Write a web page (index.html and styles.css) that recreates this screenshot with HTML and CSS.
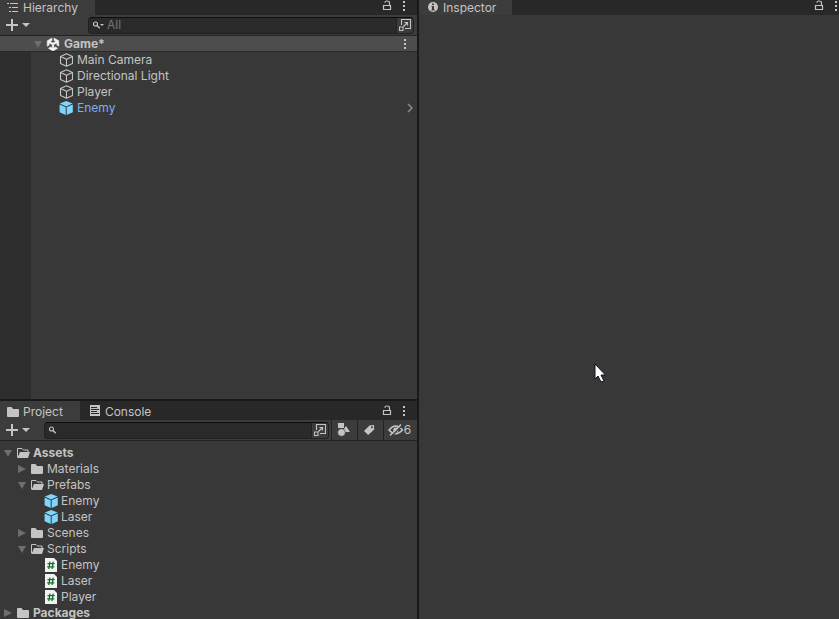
FILE: index.html
```html
<!DOCTYPE html>
<html lang="en">
  <head>
    <meta charset="UTF-8" />
    <meta name="viewport" content="width=device-width, initial-scale=1.0" />
    <title>Editor</title>
    <link rel="stylesheet" href="styles.css" />
  </head>
  <body>
    <svg class="sprite" aria-hidden="true">
      <symbol id="cube" viewBox="0 0 14 14">
        <path d="M7.500 .7 13.500 3.500v7L7.500 13.300 1.500 10.500v-7ZM1.500 3.500l6 2.800 6-2.800M7.500 6.300v7" fill="none" stroke="currentColor" stroke-width="1.1" stroke-linejoin="round" />
      </symbol>
      <symbol id="prefab" viewBox="0 0 14 14">
        <path d="M7.200 0l6.400 2.600L7.200 5.400.8 2.600ZM.6 3.500l6.100 2.700V14L.6 11.200ZM13.800 3.500 7.700 6.200V14l6.100-2.800Z" fill="currentColor" />
      </symbol>
      <symbol id="folder" viewBox="0 0 14 14">
        <path d="M1 3Q1 2 2 2h3.500l1.500 2h5q1 0 1 1v6q0 1-1 1H2q-1 0-1-1Z" fill="currentColor" />
      </symbol>
      <symbol id="folder-open" viewBox="0 0 14 14">
        <path d="M1.500 11.500V2.500H6l1.500 1.500h4.500v2" fill="none" stroke="currentColor" />
        <path d="M4 6H14l-2 6H1.500Z" fill="currentColor" />
      </symbol>
      <symbol id="script" viewBox="0 0 14 14">
        <path d="M1 0h9l3 3v11H1Z" fill="#f2f2f2" />
        <path d="M6 3.500 4.800 11M9.200 3.500 8 11M3.500 5.700h7.200M3.200 8.800h7.200" fill="none" stroke="#1c6b2c" stroke-width="1.300" />
      </symbol>
      <symbol id="down" viewBox="0 0 8 8"><path d="M0 1h8L4 8Z" fill="currentColor" /></symbol>
      <symbol id="right" viewBox="0 0 8 8"><path d="M0 0v8l8-4Z" fill="currentColor" /></symbol>
      <symbol id="lock" viewBox="0 0 10 12">
        <path d="M1.500 5.500h7v4h-7ZM7.500 5.500V3Q7.500 1 5 1 3 1 2.800 2.700" fill="none" stroke="currentColor" stroke-width="1.200" />
      </symbol>
      <symbol id="dots" viewBox="0 0 4 12">
        <path d="M1 1h2v2H1ZM1 5h2v2H1ZM1 9h2v2H1Z" fill="currentColor" />
      </symbol>
      <symbol id="plus" viewBox="0 0 12 12"><path d="M6 0v12M0 6h12" stroke="currentColor" stroke-width="2" /></symbol>
      <symbol id="caret" viewBox="0 0 8 4"><path d="M0 0h8L4 4Z" fill="currentColor" /></symbol>
      <symbol id="popout" viewBox="0 0 12 12">
        <path d="M2.500 6V.5h9v9H6M.5 8h3.500v3.500H.5ZM4.500 7.500 8.500 3.500M5.500 3.500h3v3" fill="none" stroke="currentColor" stroke-width="1.100" />
      </symbol>
      <symbol id="search" viewBox="0 0 10 10">
        <circle cx="3.500" cy="4" r="2" fill="none" stroke="currentColor" stroke-width="1.100" />
        <path d="M5 5.500 7.800 8.300" stroke="currentColor" stroke-width="1.300" />
      </symbol>
      <symbol id="hierarchy" viewBox="0 0 12 12">
        <path d="M0 2.500h2M3 2.500h8M2 6.500h2M5 6.500h6M2 10.500h2M5 10.500h6" stroke="currentColor" stroke-width="1.100" />
      </symbol>
      <symbol id="console" viewBox="0 0 10 12">
        <path d="M0 0h10v11H0Z" fill="currentColor" />
        <path d="M1 2.500h6M1 4.500h8M1 6.500h6M1 8.500h8" stroke="#282828" />
      </symbol>
      <symbol id="info" viewBox="0 0 10 10">
        <circle cx="5" cy="5" r="5" fill="currentColor" />
        <path d="M4 1.500h2V3H4ZM3.500 4H6v3.500h.8v1H3.300v-1H4V5h-.5Z" fill="#3c3c3c" />
      </symbol>
      <symbol id="unity" viewBox="0 0 14 14">
        <path d="M6 1v2.500L4.200 4.500 7 6.100l2.800-1.600L8 3.500V1l4.800 2.800v5.400l-2-1.200V5.900L7.800 7.600v3.500l1.700-1 2.100 1.200L7 14l-4.600-2.700 2.100-1.200 1.700 1V7.600L3.200 5.900V8l-2 1.200V3.800Z" fill="#f4f4f4" stroke="#f4f4f4" stroke-width=".5" />
      </symbol>
      <symbol id="shapes" viewBox="0 0 14 14">
        <path d="M1 0h6v5H1ZM9 3l4 6H8.500L6.500 6.500Z" fill="currentColor" />
        <circle cx="4.500" cy="9.500" r="3.800" fill="currentColor" stroke="#3c3c3c" stroke-width=".6" />
      </symbol>
      <symbol id="tag" viewBox="0 0 12 12">
        <path d="M5.500 1.500 10 1l.2 4.500-6 5.500L0 7Z" fill="currentColor" />
        <circle cx="8" cy="3.300" r="1" fill="#3c3c3c" />
      </symbol>
      <symbol id="hidden" viewBox="0 0 16 14">
        <path d="M1 7q6.500-8 13.500 0-7 7.500-13.500 0Z" fill="none" stroke="currentColor" stroke-width="1.500" />
        <circle cx="7.800" cy="7" r="2.500" fill="currentColor" />
        <path d="M3.200 13.200 14.200 2.200" stroke="#3c3c3c" stroke-width="1.300" />
        <path d="M2 12.500 13 1.500" stroke="currentColor" stroke-width="1.400" />
      </symbol>
      <symbol id="chevron" viewBox="0 0 6 10"><path d="m1 1 4 4-4 4" fill="none" stroke="currentColor" stroke-width="1.500" /></symbol>
    </svg>

    <main class="editor">
      <div class="column">
        <section class="panel hierarchy">
          <header class="tabs clipped">
            <button class="tab active tab-hierarchy"><svg class="icon-12"><use href="#hierarchy" /></svg>Hierarchy</button>
            <div class="tab-tools">
              <button aria-label="Lock hierarchy"><svg class="lock"><use href="#lock" /></svg></button>
              <button aria-label="Hierarchy menu"><svg class="dots"><use href="#dots" /></svg></button>
            </div>
          </header>
          <div class="toolbar hierarchy-bar">
            <button class="create" aria-label="Create object"><svg class="icon-12"><use href="#plus" /></svg><svg class="caret"><use href="#caret" /></svg></button>
            <div class="search">
              <svg class="icon-10"><use href="#search" /></svg><svg class="caret-small"><use href="#caret" /></svg>
              <input type="text" aria-label="Search hierarchy" placeholder="All" />
              <button class="popout" aria-label="Open hierarchy search"><svg class="icon-12"><use href="#popout" /></svg></button>
            </div>
          </div>
          <div class="scene">
            <svg class="arrow"><use href="#down" /></svg>
            <svg class="icon-14"><use href="#unity" /></svg>
            <b>Game*</b>
            <button class="push" aria-label="Scene menu"><svg class="dots"><use href="#dots" /></svg></button>
          </div>
          <div class="objects">
            <div class="gutter"></div>
            <ul class="object-list">
              <li><svg class="icon-14"><use href="#cube" /></svg>Main Camera</li>
              <li><svg class="icon-14"><use href="#cube" /></svg>Directional Light</li>
              <li><svg class="icon-14"><use href="#cube" /></svg>Player</li>
              <li class="linked">
                <svg class="icon-14 prefab"><use href="#prefab" /></svg>Enemy
                <button class="push" aria-label="Open prefab"><svg class="chevron"><use href="#chevron" /></svg></button>
              </li>
            </ul>
          </div>
        </section>

        <section class="panel project">
          <header class="tabs">
            <button class="tab active tab-project"><svg class="icon-14"><use href="#folder" /></svg>Project</button>
            <button class="tab tab-console"><svg class="console"><use href="#console" /></svg>Console</button>
            <div class="tab-tools">
              <button aria-label="Lock project"><svg class="lock"><use href="#lock" /></svg></button>
              <button aria-label="Project menu"><svg class="dots"><use href="#dots" /></svg></button>
            </div>
          </header>
          <div class="toolbar project-bar">
            <button class="create" aria-label="Create asset"><svg class="icon-12"><use href="#plus" /></svg><svg class="caret"><use href="#caret" /></svg></button>
            <div class="search">
              <svg class="icon-10"><use href="#search" /></svg>
              <input type="text" aria-label="Search project" />
              <button class="popout" aria-label="Open project search"><svg class="icon-12"><use href="#popout" /></svg></button>
            </div>
            <div class="filters">
              <button aria-label="Search by type"><svg class="icon-14"><use href="#shapes" /></svg></button>
              <button aria-label="Search by label"><svg class="icon-12"><use href="#tag" /></svg></button>
              <button class="hidden-count" aria-label="Hidden packages"><svg class="eye"><use href="#hidden" /></svg>6</button>
            </div>
          </div>
          <ul class="tree">
            <li><div class="row"><svg class="arrow"><use href="#down" /></svg><svg class="icon-14"><use href="#folder-open" /></svg><b>Assets</b></div>
              <ul>
                <li><div class="row"><svg class="arrow"><use href="#right" /></svg><svg class="icon-14"><use href="#folder" /></svg>Materials</div></li>
                <li><div class="row"><svg class="arrow"><use href="#down" /></svg><svg class="icon-14"><use href="#folder-open" /></svg>Prefabs</div>
                  <ul>
                    <li><div class="row leaf"><svg class="icon-14 prefab"><use href="#prefab" /></svg>Enemy</div></li>
                    <li><div class="row leaf"><svg class="icon-14 prefab"><use href="#prefab" /></svg>Laser</div></li>
                  </ul>
                </li>
                <li><div class="row"><svg class="arrow"><use href="#right" /></svg><svg class="icon-14"><use href="#folder" /></svg>Scenes</div></li>
                <li><div class="row"><svg class="arrow"><use href="#down" /></svg><svg class="icon-14"><use href="#folder-open" /></svg>Scripts</div>
                  <ul>
                    <li><div class="row leaf"><svg class="icon-14"><use href="#script" /></svg>Enemy</div></li>
                    <li><div class="row leaf"><svg class="icon-14"><use href="#script" /></svg>Laser</div></li>
                    <li><div class="row leaf"><svg class="icon-14"><use href="#script" /></svg>Player</div></li>
                  </ul>
                </li>
              </ul>
            </li>
            <li><div class="row"><svg class="arrow"><use href="#right" /></svg><svg class="icon-14"><use href="#folder" /></svg><b>Packages</b></div></li>
          </ul>
        </section>
      </div>

      <section class="panel inspector">
        <header class="tabs clipped">
          <button class="tab active tab-inspector"><svg class="icon-10"><use href="#info" /></svg>Inspector</button>
          <div class="tab-tools">
            <button aria-label="Lock inspector"><svg class="lock"><use href="#lock" /></svg></button>
            <button aria-label="Inspector menu"><svg class="dots"><use href="#dots" /></svg></button>
          </div>
        </header>
      </section>
    </main>

    <svg class="cursor" viewBox="0 0 12 20" aria-hidden="true">
      <path d="M1 1v15l3-3 3 6 3-1-3-6h4.500Z" fill="#fff" stroke="#101020" />
    </svg>
  </body>
</html>
```
FILE: styles.css
```css
* {
  margin: 0;
  padding: 0;
  box-sizing: border-box;
}

body {
  font-family: Inter, Roboto, sans-serif;
  font-size: 12px;
  line-height: 16px;
  color: #c4c4c4;
  background-color: #191919;
  overflow: hidden;
}

ul {
  list-style: none;
}

svg {
  display: block;
  flex: none;
}

b {
  font-weight: 700;
}

button {
  display: flex;
  align-items: center;
  border: none;
  background: none;
  font: inherit;
  color: inherit;
}

.sprite {
  position: absolute;
  width: 0;
  height: 0;
}

.icon-10 {
  width: 10px;
  height: 10px;
}

.icon-12 {
  width: 12px;
  height: 12px;
}

.icon-14 {
  width: 14px;
  height: 14px;
}

.prefab {
  color: #7fd6fd;
}

.arrow {
  width: 8px;
  height: 8px;
  color: #6e6e6e;
}

.lock {
  width: 10px;
  height: 12px;
}

.dots {
  width: 4px;
  height: 12px;
}

.caret {
  width: 8px;
  height: 4px;
}

.caret-small {
  width: 4px;
  height: 2px;
  margin-left: -2px;
}

.console {
  width: 10px;
  height: 12px;
}

.chevron {
  width: 6px;
  height: 10px;
  color: #8c8c8c;
}

.eye {
  width: 16px;
  height: 14px;
}

.push {
  margin-left: auto;
}

.editor {
  display: grid;
  grid-template-columns: 417fr 420fr;
  gap: 2px;
  height: 100vh;
}

.column {
  display: grid;
  grid-template-rows: 399fr 218fr;
  gap: 2px;
  min-height: 0;
}

.panel {
  display: flex;
  flex-direction: column;
  min-width: 0;
  min-height: 0;
  overflow: hidden;
  background-color: #383838;
}

/* tabs */
.tabs {
  display: flex;
  align-items: flex-end;
  flex: none;
  height: 19px;
  background-color: #282828;
  overflow: hidden;
}

.tabs.clipped {
  height: 15px;
}

.tab {
  height: 19px;
  gap: 3px;
  padding: 3px 17px 0 6px;
  line-height: 14px;
}

.tab svg {
  margin-bottom: 2px;
}

.clipped .tab {
  height: 15px;
  padding-top: 0;
}

.tab.active {
  background-color: #3c3c3c;
}

.tab-project svg {
  margin-bottom: 0;
}

.clipped .tab-hierarchy {
  gap: 4px;
  padding: 0 17px 0 7px;
}

.tab-console {
  gap: 5px;
  padding-left: 10px;
}

.clipped .tab-inspector {
  gap: 5px;
  padding: 0 16px 0 9px;
}

.tab-tools {
  display: flex;
  align-items: center;
  gap: 10px;
  height: 19px;
  margin-left: auto;
  padding-right: 11px;
}

.inspector .tab-tools {
  padding-right: 1px;
}

/* toolbars */
.toolbar {
  display: flex;
  align-items: center;
  flex: none;
  height: 21px;
  padding-left: 6px;
  background-color: #3c3c3c;
  border-bottom: 1px solid #232323;
}

.hierarchy-bar {
  padding-right: 3px;
}

.create {
  gap: 4px;
}

.search {
  display: flex;
  align-items: center;
  flex: 1;
  height: 17px;
  min-width: 0;
  padding-left: 3px;
  border: 1px solid #212121;
  border-top-color: #0d0d0d;
  border-radius: 4px;
  background-color: #2a2a2a;
  overflow: hidden;
}

.hierarchy-bar .search {
  margin-left: 58px;
}

.project-bar .search {
  margin-left: 14px;
}

.search input {
  flex: 1;
  min-width: 0;
  height: 15px;
  padding-left: 3px;
  border: none;
  outline: none;
  background: none;
  font: inherit;
  color: #c4c4c4;
}

.search input::placeholder {
  color: #757575;
}

.popout {
  height: 17px;
  padding: 0 2px;
  border-left: 1px solid #212121;
  background-color: #3c3c3c;
}

.filters {
  display: flex;
  align-self: stretch;
  margin-left: 2px;
}

.filters button {
  justify-content: center;
  width: 26px;
  padding-right: 2px;
  border-left: 1px solid #232323;
}

.filters .hidden-count {
  width: 34px;
}

/* hierarchy */
.scene {
  display: flex;
  align-items: center;
  flex: none;
  gap: 4px;
  height: 16px;
  padding: 0 10px 0 34px;
  background-color: #4d4d4d;
  border-bottom: 1px solid #2a2a2a;
}

.objects {
  display: flex;
  flex: 1;
}

.gutter {
  width: 31px;
  background-color: #2d2d2d;
}

.object-list {
  flex: 1;
}

.object-list li {
  display: flex;
  align-items: center;
  gap: 4px;
  height: 16px;
  padding: 0 4px 0 28px;
}

.linked {
  color: #7fadf0;
}

/* project */
.tree {
  padding-top: 4px;
}

.tree ul {
  padding-left: 14px;
}

.tree .row {
  display: flex;
  align-items: center;
  gap: 3px;
  height: 16px;
  padding-left: 4px;
}

.tree .arrow {
  margin-right: 1px;
}

.tree .leaf {
  padding-left: 16px;
}

.cursor {
  position: absolute;
  left: 594px;
  top: 363px;
  width: 12px;
  height: 20px;
}
```
